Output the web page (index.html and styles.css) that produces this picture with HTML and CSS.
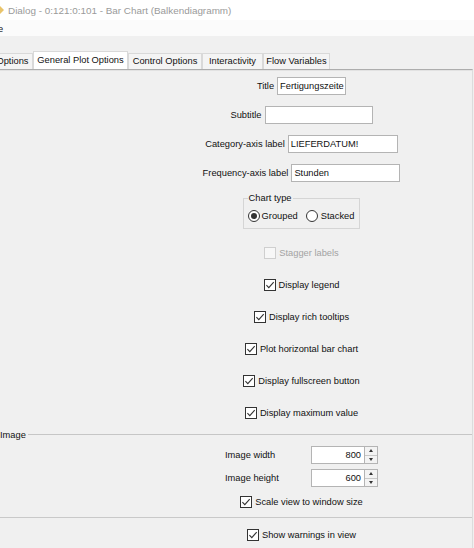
FILE: index.html
```html
<!DOCTYPE html>
<html>
<head>
<meta charset="utf-8">
<link rel="stylesheet" href="styles.css">
</head>
<body>
<div class="titlebar">
  <svg class="appicon" width="4" height="10" viewBox="0 0 4 10"><path d="M0 1 L4 5 L0 9 Z" fill="#e9c46a"/></svg>
  <span>Dialog - 0:121:0:101 - Bar Chart (Balkendiagramm)</span>
</div>
<div class="menubar"><span class="menu-item">e</span></div>
<div class="tabs">
  <div class="tab tab-options">Options</div>
  <div class="tab tab-general active">General Plot Options</div>
  <div class="tab tab-control">Control Options</div>
  <div class="tab tab-inter">Interactivity</div>
  <div class="tab tab-flow">Flow Variables</div>
</div>
<div class="panel">
  <div class="form">
    <div class="field"><span>Title</span><div class="input w-title">Fertigungszeite</div></div>
    <div class="field"><span>Subtitle</span><div class="input w-sub"></div></div>
    <div class="field"><span>Category-axis label</span><div class="input w-cat">LIEFERDATUM!</div></div>
    <div class="field"><span>Frequency-axis label</span><div class="input w-freq">Stunden</div></div>
    <fieldset class="chart-type">
      <legend>Chart type</legend>
      <div class="radio">
        <svg class="rb" viewBox="0 0 12 12"><circle cx="6" cy="6" r="5.5" fill="#fff" stroke="#333"/><circle cx="6" cy="6" r="3" fill="#333"/></svg>
        <span>Grouped</span>
      </div>
      <div class="radio">
        <svg class="rb" viewBox="0 0 12 12"><circle cx="6" cy="6" r="5.5" fill="#fff" stroke="#333"/></svg>
        <span>Stacked</span>
      </div>
    </fieldset>
    <div class="checks">
      <div class="check disabled">
        <svg class="cb" viewBox="0 0 12 12"><rect x="0.5" y="0.5" width="11" height="11" fill="#f7f7f7" stroke="#cfcfcf"/></svg>
        <span>Stagger labels</span>
      </div>
      <div class="check">
        <svg class="cb" viewBox="0 0 12 12"><rect x="0.5" y="0.5" width="11" height="11" fill="#fff" stroke="#333"/><polyline points="2.4,6.1 4.8,8.6 9.7,3.1" fill="none" stroke="#333" stroke-width="1.1"/></svg>
        <span>Display legend</span>
      </div>
      <div class="check">
        <svg class="cb" viewBox="0 0 12 12"><rect x="0.5" y="0.5" width="11" height="11" fill="#fff" stroke="#333"/><polyline points="2.4,6.1 4.8,8.6 9.7,3.1" fill="none" stroke="#333" stroke-width="1.1"/></svg>
        <span>Display rich tooltips</span>
      </div>
      <div class="check">
        <svg class="cb" viewBox="0 0 12 12"><rect x="0.5" y="0.5" width="11" height="11" fill="#fff" stroke="#333"/><polyline points="2.4,6.1 4.8,8.6 9.7,3.1" fill="none" stroke="#333" stroke-width="1.1"/></svg>
        <span>Plot horizontal bar chart</span>
      </div>
      <div class="check">
        <svg class="cb" viewBox="0 0 12 12"><rect x="0.5" y="0.5" width="11" height="11" fill="#fff" stroke="#333"/><polyline points="2.4,6.1 4.8,8.6 9.7,3.1" fill="none" stroke="#333" stroke-width="1.1"/></svg>
        <span>Display fullscreen button</span>
      </div>
      <div class="check">
        <svg class="cb" viewBox="0 0 12 12"><rect x="0.5" y="0.5" width="11" height="11" fill="#fff" stroke="#333"/><polyline points="2.4,6.1 4.8,8.6 9.7,3.1" fill="none" stroke="#333" stroke-width="1.1"/></svg>
        <span>Display maximum value</span>
      </div>
    </div>
  </div>
  <div class="image-box">
    <div class="box-head"><span>Image</span><div class="box-line"></div></div>
    <div class="spin-grid">
      <span class="spin-label">Image width</span>
      <div class="spin"><div class="num">800</div><div class="spinbtn"><div class="half"><i class="up"></i></div><div class="half"><i class="down"></i></div></div></div>
      <span class="spin-label">Image height</span>
      <div class="spin"><div class="num">600</div><div class="spinbtn"><div class="half"><i class="up"></i></div><div class="half"><i class="down"></i></div></div></div>
    </div>
    <div class="check scale">
      <svg class="cb" viewBox="0 0 12 12"><rect x="0.5" y="0.5" width="11" height="11" fill="#fff" stroke="#333"/><polyline points="2.4,6.1 4.8,8.6 9.7,3.1" fill="none" stroke="#333" stroke-width="1.1"/></svg>
      <span>Scale view to window size</span>
    </div>
  </div>
  <div class="check warnings">
    <svg class="cb" viewBox="0 0 12 12"><rect x="0.5" y="0.5" width="11" height="11" fill="#fff" stroke="#333"/><polyline points="2.4,6.1 4.8,8.6 9.7,3.1" fill="none" stroke="#333" stroke-width="1.1"/></svg>
    <span>Show warnings in view</span>
  </div>
</div>
</body>
</html>
```
FILE: styles.css
```css
html, body {
  margin: 0;
  padding: 0;
}
body {
  background: #f0f0f0;
  font-family: "Liberation Sans", Arial, sans-serif;
  font-size: 9.3px;
  color: #111;
  width: 474px;
  height: 548px;
  overflow: hidden;
}
.titlebar {
  height: 20px;
  background: #fff;
  display: flex;
  align-items: center;
  gap: 4px;
  color: #9a9a9a;
  font-size: 9.9px;
}
.appicon {
  display: block;
  flex: none;
}
.menubar {
  height: 16px;
  box-sizing: border-box;
  padding-top: 2px;
  line-height: 14px;
  background: #fbfbfb;
}
.menu-item {
  display: inline-block;
  margin-left: -2px;
}
.tabs {
  height: 33px;
  display: flex;
  align-items: flex-end;
  overflow: hidden;
}
.tab {
  flex: none;
  height: 16px;
  box-sizing: border-box;
  border: 1px solid #d9d9d9;
  border-bottom: none;
  background: #f4f4f4;
  text-align: center;
  line-height: 15px;
  white-space: nowrap;
}
.tab.active {
  height: 18px;
  line-height: 17px;
  background: #fff;
}
.tab-options { width: 41px; margin-left: -8px; }
.tab-general { width: 95px; }
.tab-control { width: 74px; }
.tab-inter { width: 61px; }
.tab-flow { width: 67px; }

.panel {
  width: 473px;
  height: 479px;
  box-sizing: border-box;
  border-top: 1px solid #adadad;
  border-right: 1px solid #dcdcdc;
  box-shadow: inset 0 1px 0 #e2e2e2;
}
.form {
  padding: 7px 0 0 131px;
}
.field {
  display: flex;
  justify-content: center;
  align-items: center;
  gap: 3px;
  height: 18px;
  margin-bottom: 11px;
  white-space: nowrap;
}
.input {
  height: 18px;
  box-sizing: border-box;
  border: 1px solid #b4b4b4;
  background: #fff;
  padding-left: 2px;
  line-height: 16px;
  overflow: hidden;
  white-space: nowrap;
}
.w-title { width: 69px; }
.w-sub { width: 108px; }
.w-cat { width: 110px; }
.w-freq { width: 109px; }

.chart-type {
  margin: 1px auto 0;
  width: max-content;
  padding: 4px 5px 5px 4px;
  border: 1px solid #d5d5d5;
  display: flex;
  align-items: center;
  gap: 8px;
  height: auto;
}
.chart-type legend {
  padding: 0 1px;
  line-height: 11px;
}
.radio {
  display: flex;
  align-items: center;
  height: 15px;
  gap: 2px;
}
.radio + .radio { gap: 3px; }
.rb, .cb {
  width: 12px;
  height: 12px;
  flex: none;
  display: block;
}
.checks {
  margin-top: 8px;
}
.check {
  display: flex;
  justify-content: center;
  align-items: center;
  gap: 3px;
  height: 32px;
  white-space: nowrap;
}
.check.disabled span {
  color: #a3a3a3;
}
.image-box {
  border-bottom: 1px solid #c9c9c9;
  padding-bottom: 5px;
}
.box-head {
  margin-top: 1px;
  height: 10px;
  display: flex;
  align-items: center;
  gap: 2px;
}
.box-line {
  flex: 1;
  height: 0;
  border-top: 1px solid #c6c6c6;
  margin-top: -1px;
}
.spin-grid {
  margin-top: 6px;
  padding-left: 131px;
  display: grid;
  grid-template-columns: 86px auto;
  row-gap: 5px;
  justify-content: center;
  align-items: center;
}
.spin {
  display: flex;
}
.num {
  width: 54px;
  height: 18px;
  box-sizing: border-box;
  border: 1px solid #b4b4b4;
  background: #fff;
  text-align: right;
  padding-right: 3px;
  line-height: 16px;
}
.spinbtn {
  width: 13px;
  height: 18px;
  box-sizing: border-box;
  border: 1px solid #b4b4b4;
  border-left: none;
  background: #f3f3f3;
  display: flex;
  flex-direction: column;
}
.half {
  flex: 1;
  display: flex;
  align-items: center;
  justify-content: center;
}
.half + .half {
  border-top: 1px solid #c8c8c8;
}
.up {
  width: 0;
  height: 0;
  border-left: 2.5px solid transparent;
  border-right: 2.5px solid transparent;
  border-bottom: 3px solid #333;
}
.down {
  width: 0;
  height: 0;
  border-left: 2.5px solid transparent;
  border-right: 2.5px solid transparent;
  border-top: 3px solid #333;
}
.check.scale {
  margin-top: 4px;
  height: 21px;
  padding-left: 131px;
}
.check.warnings {
  margin-top: 5px;
  height: 24px;
  padding-left: 131px;
}
```
